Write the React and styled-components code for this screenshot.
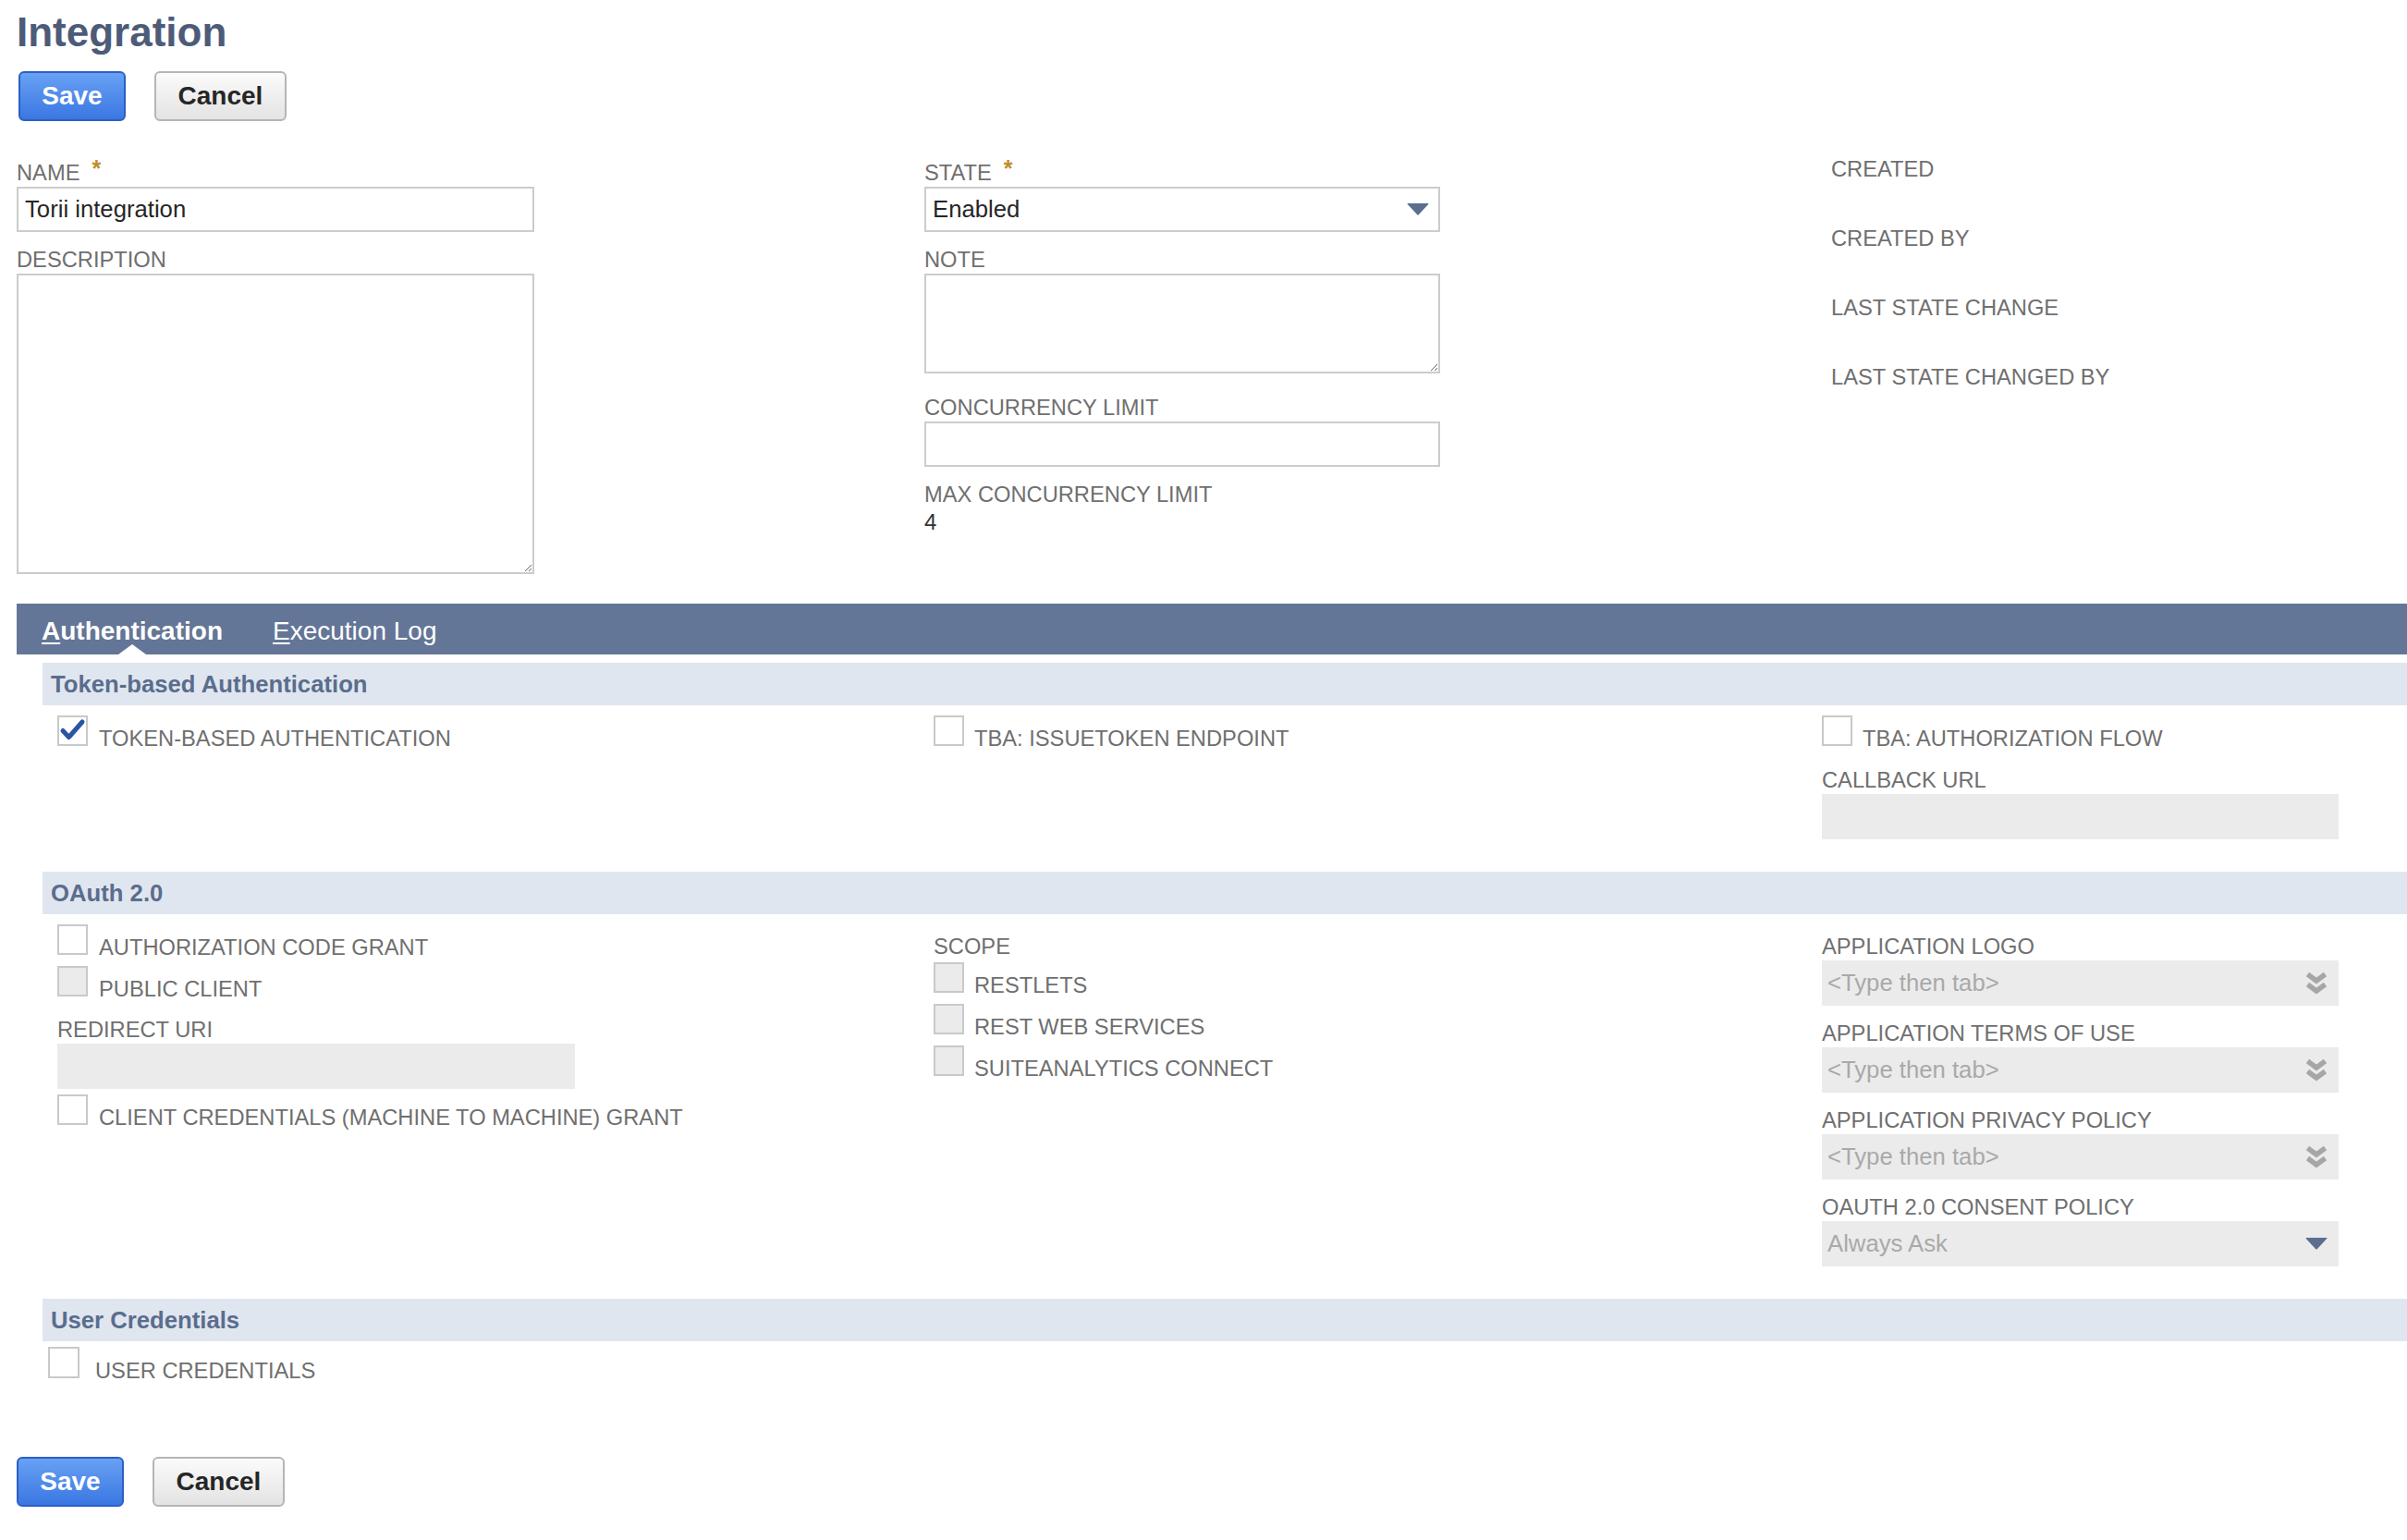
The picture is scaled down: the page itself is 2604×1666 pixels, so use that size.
import React from "react";
import styled, { createGlobalStyle, css } from "styled-components";

const GlobalStyle = createGlobalStyle`
  html, body {
    margin: 0;
    padding: 0;
    background: #fff;
  }
  body {
    font-family: "Liberation Sans", Arial, Helvetica, sans-serif;
  }
  * {
    box-sizing: border-box;
  }
`;

const Page = styled.div`
  width: 2604px;
  padding: 10px 0 30px 18px;
  overflow: hidden;
`;

const Title = styled.h1`
  margin: 0;
  font-size: 44px;
  line-height: 50px;
  font-weight: bold;
  color: #4d5b79;
`;

const ButtonRow = styled.div`
  display: flex;
  gap: 31px;
  margin-top: ${(p) => p.$top}px;
  padding-left: ${(p) => p.$left || 0}px;
`;

const Button = styled.button`
  height: 54px;
  width: ${(p) => (p.$primary ? 116 : 143)}px;
  padding: 0;
  font-family: inherit;
  font-size: 28px;
  font-weight: bold;
  border-radius: 6px;
  cursor: pointer;
  ${(p) =>
    p.$primary
      ? css`
          color: #fff;
          background: linear-gradient(#68a1f4, #3a77e2);
          border: 2px solid #2c5fc4;
        `
      : css`
          color: #262626;
          background: linear-gradient(#fbfbfb, #e3e3e3);
          border: 2px solid #b5b5b5;
        `}
`;

const HeaderGrid = styled.div`
  display: grid;
  grid-template-columns: 982px 981px 1fr;
  margin-top: 37px;
`;

const Column = styled.div`
  display: flex;
  flex-direction: column;
  padding-top: ${(p) => p.$offset || 0}px;
`;

const Field = styled.div`
  width: ${(p) => p.$w || 560}px;
  margin-bottom: ${(p) => (p.$gap === undefined ? 16 : p.$gap)}px;
  margin-top: ${(p) => p.$top || 0}px;
`;

const Label = styled.div`
  font-size: 23.7px;
  line-height: 29px;
  color: #6f6f6f;
  white-space: nowrap;
`;

const Req = styled.span`
  margin-left: 13px;
  font-weight: bold;
  font-size: 25px;
  color: #c28b2b;
  vertical-align: 4px;
`;

const TextBox = styled.div`
  height: 49px;
  display: flex;
  align-items: center;
  justify-content: space-between;
  padding: 0 10px 0 ${(p) => (p.$disabled ? 4 : 7)}px;
  font-size: 25.7px;
  white-space: nowrap;
  color: ${(p) => (p.$muted ? "#a9a9a9" : "#262626")};
  background: ${(p) => (p.$disabled ? "#ebebeb" : "#fff")};
  border: 2px solid ${(p) => (p.$disabled ? "#ebebeb" : "#cccccc")};
`;

const TextArea = styled.textarea`
  display: block;
  width: 100%;
  height: ${(p) => p.$h}px;
  margin: 0;
  padding: 6px;
  border: 2px solid #cccccc;
  border-radius: 0;
  font-family: inherit;
  font-size: 25.7px;
  resize: both;
  outline: none;
`;

const Value = styled.div`
  font-size: 24px;
  line-height: 29px;
  color: #333;
`;

const InfoList = styled.div`
  display: flex;
  flex-direction: column;
  gap: 46px;
  margin-top: 1px;
`;

const TabBar = styled.div`
  margin-top: 32px;
  height: 55px;
  background: #647697;
  display: flex;
  gap: 54px;
  padding-left: 27px;
`;

const Tab = styled.div`
  position: relative;
  height: 55px;
  padding-top: 4px;
  display: flex;
  align-items: center;
  font-size: 28px;
  color: #fff;
  font-weight: ${(p) => (p.$active ? "bold" : "normal")};

  u {
    text-decoration-thickness: 2px;
    text-underline-offset: 3px;
  }

  ${(p) =>
    p.$active &&
    css`
      &::after {
        content: "";
        position: absolute;
        left: 50%;
        bottom: 0;
        transform: translateX(-50%);
        border-left: 15px solid transparent;
        border-right: 15px solid transparent;
        border-bottom: 11px solid #fff;
      }
    `}
`;

const Section = styled.div`
  margin-left: 28px;
`;

const SectionHead = styled.div`
  margin-top: ${(p) => p.$top || 0}px;
  height: 46px;
  padding-left: 9px;
  background: #e0e6ef;
  font-size: 25.7px;
  line-height: 46px;
  font-weight: bold;
  color: #5a6d8d;
`;

const SectionBody = styled.div`
  display: grid;
  grid-template-columns: ${(p) => p.$cols || "948px 961px 1fr"};
  padding: ${(p) => p.$pt || 11}px 0 ${(p) => p.$pb || 0}px ${(p) => p.$pl || 16}px;
`;

const CheckRow = styled.div`
  display: flex;
  align-items: baseline;
  height: ${(p) => p.$size || 33}px;
  gap: ${(p) => p.$gap || 11}px;
  margin-bottom: ${(p) => p.$mb || 0}px;
  font-size: 23.7px;
  line-height: 29px;
  color: #6f6f6f;
  white-space: nowrap;
`;

const Box = styled.span`
  position: relative;
  display: block;
  flex: none;
  width: ${(p) => p.$size || 33}px;
  height: ${(p) => p.$size || 33}px;
  border: 2px solid #c9c9c9;
  background: ${(p) => (p.$disabled ? "#ebebeb" : "#fff")};

  svg {
    position: absolute;
    left: 0;
    top: 0;
  }
`;

const Check = ({ label, checked, disabled, size, gap, mb }) => (
  <CheckRow $size={size} $gap={gap} $mb={mb}>
    <Box $size={size} $disabled={disabled}>
      {checked && (
        <svg width="29" height="29" viewBox="0 0 29 29">
          <path
            d="M4 14.5 L10.5 21.5 L25 5"
            fill="none"
            stroke="#2a55a2"
            strokeWidth="5"
            strokeLinecap="round"
            strokeLinejoin="round"
          />
        </svg>
      )}
    </Box>
    <span>{label}</span>
  </CheckRow>
);

const Triangle = () => (
  <svg width="24" height="13" viewBox="0 0 24 13">
    <path d="M1 0 H23 Q24 0 23.2 1 L12.8 12.3 Q12 13 11.2 12.3 L0.8 1 Q0 0 1 0 Z" fill="#5b6e8f" />
  </svg>
);

const DoubleChevron = () => (
  <svg width="24" height="25" viewBox="0 0 24 25">
    <polyline points="2.5,3 12,10 21.5,3" fill="none" stroke="#a6a6a6" strokeWidth="5.5" />
    <polyline points="2.5,14 12,21 21.5,14" fill="none" stroke="#a6a6a6" strokeWidth="5.5" />
  </svg>
);

const Buttons = ({ top, left }) => (
  <ButtonRow $top={top} $left={left}>
    <Button $primary>Save</Button>
    <Button>Cancel</Button>
  </ButtonRow>
);

const LookupField = ({ label, gap }) => (
  <Field $w={559} $gap={gap}>
    <Label>{label}</Label>
    <TextBox $disabled $muted>
      <span>&lt;Type then tab&gt;</span>
      <DoubleChevron />
    </TextBox>
  </Field>
);

export default function App() {
  return (
    <Page>
      <GlobalStyle />
      <Title>Integration</Title>
      <Buttons top={17} left={2} />

      <HeaderGrid>
        <Column>
          <Field>
            <Label>
              NAME<Req>*</Req>
            </Label>
            <TextBox>Torii integration</TextBox>
          </Field>
          <Field $gap={0}>
            <Label>DESCRIPTION</Label>
            <TextArea $h={325} readOnly />
          </Field>
        </Column>
        <Column>
          <Field $w={558}>
            <Label>
              STATE<Req>*</Req>
            </Label>
            <TextBox>
              <span>Enabled</span>
              <Triangle />
            </TextBox>
          </Field>
          <Field $w={558} $gap={23}>
            <Label>NOTE</Label>
            <TextArea $h={108} readOnly />
          </Field>
          <Field $w={558}>
            <Label>CONCURRENCY LIMIT</Label>
            <TextBox />
          </Field>
          <Field $w={558} $gap={0}>
            <Label>MAX CONCURRENCY LIMIT</Label>
            <Value>4</Value>
          </Field>
        </Column>
        <Column>
          <InfoList>
            <Label>CREATED</Label>
            <Label>CREATED BY</Label>
            <Label>LAST STATE CHANGE</Label>
            <Label>LAST STATE CHANGED BY</Label>
          </InfoList>
        </Column>
      </HeaderGrid>

      <TabBar>
        <Tab $active>
          <span>
            <u>A</u>uthentication
          </span>
        </Tab>
        <Tab>
          <span>
            <u>E</u>xecution Log
          </span>
        </Tab>
      </TabBar>

      <Section>
        <SectionHead $top={9}>Token-based Authentication</SectionHead>
        <SectionBody $pb={35}>
          <Column>
            <Check label="TOKEN-BASED AUTHENTICATION" checked gap={12} />
          </Column>
          <Column>
            <Check label="TBA: ISSUETOKEN ENDPOINT" />
          </Column>
          <Column>
            <Check label="TBA: AUTHORIZATION FLOW" />
            <Field $w={559} $top={23} $gap={0}>
              <Label>CALLBACK URL</Label>
              <TextBox $disabled />
            </Field>
          </Column>
        </SectionBody>

        <SectionHead>OAuth 2.0</SectionHead>
        <SectionBody $pb={35}>
          <Column>
            <Check label="AUTHORIZATION CODE GRANT" gap={12} mb={12} />
            <Check label="PUBLIC CLIENT" disabled gap={12} mb={22} />
            <Field $w={560} $gap={6}>
              <Label>REDIRECT URI</Label>
              <TextBox $disabled />
            </Field>
            <Check label="CLIENT CREDENTIALS (MACHINE TO MACHINE) GRANT" gap={12} />
          </Column>
          <Column $offset={10}>
            <Field $w={560} $gap={2}>
              <Label>SCOPE</Label>
            </Field>
            <Check label="RESTLETS" disabled mb={12} />
            <Check label="REST WEB SERVICES" disabled mb={12} />
            <Check label="SUITEANALYTICS CONNECT" disabled />
          </Column>
          <Column $offset={10}>
            <LookupField label="APPLICATION LOGO" />
            <LookupField label="APPLICATION TERMS OF USE" />
            <LookupField label="APPLICATION PRIVACY POLICY" />
            <Field $w={559} $gap={0}>
              <Label>OAUTH 2.0 CONSENT POLICY</Label>
              <TextBox $disabled $muted>
                <span>Always Ask</span>
                <Triangle />
              </TextBox>
            </Field>
          </Column>
        </SectionBody>

        <SectionHead>User Credentials</SectionHead>
        <SectionBody $cols="1fr" $pt={6} $pl={6}>
          <Check label="USER CREDENTIALS" size={34} gap={17} />
        </SectionBody>
      </Section>

      <Buttons top={85} />
    </Page>
  );
}
